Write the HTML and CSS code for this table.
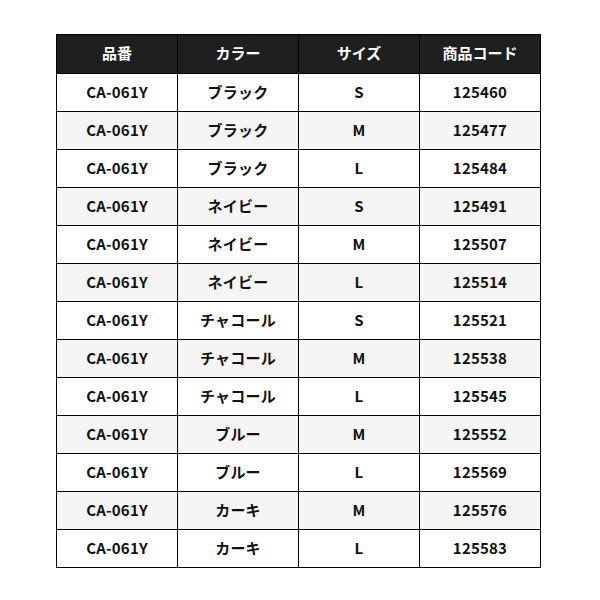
FILE: index.html
```html
<!DOCTYPE html>
<html lang="ja">
<head>
<meta charset="utf-8">
<link rel="stylesheet" href="styles.css">
</head>
<body>
<div class="wrap">
<table class="spec">
<thead>
<tr><th>品番</th><th>カラー</th><th>サイズ</th><th>商品コード</th></tr>
</thead>
<tbody>
<tr><td>CA-061Y</td><td>ブラック</td><td>S</td><td>125460</td></tr>
<tr><td>CA-061Y</td><td>ブラック</td><td>M</td><td>125477</td></tr>
<tr><td>CA-061Y</td><td>ブラック</td><td>L</td><td>125484</td></tr>
<tr><td>CA-061Y</td><td>ネイビー</td><td>S</td><td>125491</td></tr>
<tr><td>CA-061Y</td><td>ネイビー</td><td>M</td><td>125507</td></tr>
<tr><td>CA-061Y</td><td>ネイビー</td><td>L</td><td>125514</td></tr>
<tr><td>CA-061Y</td><td>チャコール</td><td>S</td><td>125521</td></tr>
<tr><td>CA-061Y</td><td>チャコール</td><td>M</td><td>125538</td></tr>
<tr><td>CA-061Y</td><td>チャコール</td><td>L</td><td>125545</td></tr>
<tr><td>CA-061Y</td><td>ブルー</td><td>M</td><td>125552</td></tr>
<tr><td>CA-061Y</td><td>ブルー</td><td>L</td><td>125569</td></tr>
<tr><td>CA-061Y</td><td>カーキ</td><td>M</td><td>125576</td></tr>
<tr><td>CA-061Y</td><td>カーキ</td><td>L</td><td>125583</td></tr>
</tbody>
</table>
</div>
</body>
</html>
```
FILE: styles.css
```css
html, body {
  margin: 0;
  padding: 0;
  background: #fff;
}
.wrap {
  padding: 34px 0 0 56px;
}
.spec {
  border-collapse: collapse;
  table-layout: fixed;
  width: 485px;
  font-family: "Noto Sans CJK JP", "Noto Sans", sans-serif;
  font-weight: 700;
  font-size: 15px;
  color: #111;
}
.spec th, .spec td {
  border: 1px solid #000;
  padding: 0 0 2px;
  text-align: center;
  vertical-align: middle;
  line-height: 20px;
}
.spec th {
  background: #1f1f1f;
  color: #fff;
  height: 36px;
}
.spec td {
  height: 35px;
  letter-spacing: 0.2px;
}
.spec tbody tr:nth-child(even) td {
  background: #f5f5f5;
}
```
